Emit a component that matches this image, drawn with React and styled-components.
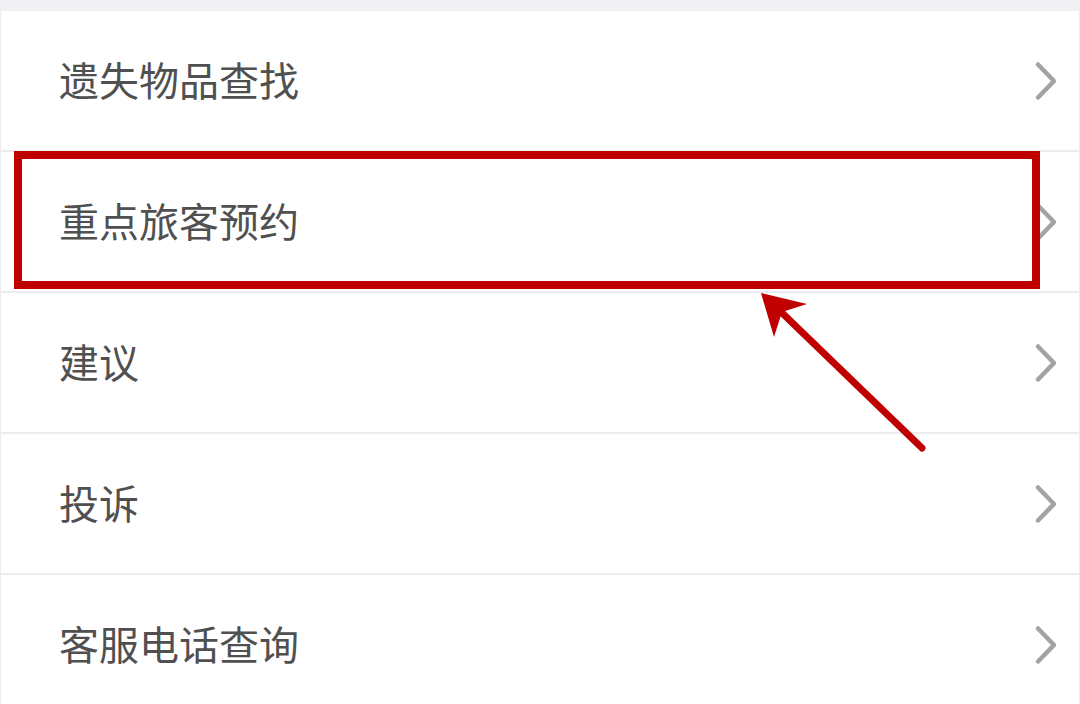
import React from "react";
import styled, { createGlobalStyle } from "styled-components";

const Global = createGlobalStyle`
  html, body { margin: 0; padding: 0; background: #f0f0f5; }
  body { font-family: "Noto Sans CJK SC", "Noto Sans", sans-serif; }
`;

const Page = styled.div`
  position: relative;
  width: 1080px;
  height: 704px;
  overflow: hidden;
  padding-top: 11px;
  box-sizing: border-box;
  background: #f0f0f5;
`;

const List = styled.ul`
  list-style: none;
  margin: 0;
  padding: 0;
  background: #ffffff;
  border-left: 1px solid #ececf1;
  border-right: 1px solid #ececf1;
`;

const Row = styled.li`
  position: relative;
  height: 139px;
  box-sizing: content-box;
  display: flex;
  align-items: center;
  justify-content: space-between;
  padding: 0 21px 0 58px;
  border-bottom: 2px solid #ebebf0;
  background: #ffffff;
`;

const Label = styled.span`
  font-size: 40px;
  font-weight: 400;
  line-height: 1;
  color: #505050;
  position: relative;
  top: -2px;
`;

const Chevron = styled.svg`
  width: 24px;
  height: 40px;
  flex: none;
`;

const Highlight = styled.div`
  position: absolute;
  left: 13px;
  top: -1px;
  width: 1026px;
  height: 138px;
  box-sizing: border-box;
  border: 8.5px solid #c00000;
  pointer-events: none;
`;

const ArrowLayer = styled.svg`
  position: absolute;
  left: 0;
  top: 0;
  width: 1080px;
  height: 704px;
  pointer-events: none;
`;

const items = ["遗失物品查找", "重点旅客预约", "建议", "投诉", "客服电话查询"];

function Arrow() {
  return (
    <ArrowLayer viewBox="0 0 1080 704">
      <line x1="922" y1="448" x2="778" y2="309" stroke="#c00000" strokeWidth="7" strokeLinecap="round" />
      <polygon points="761,293 807,304 782,312 774,337" fill="#c00000" />
    </ArrowLayer>
  );
}

export default function App() {
  return (
    <Page>
      <Global />
      <List>
        {items.map((t, i) => (
          <Row key={t}>
            <Label>{t}</Label>
            <Chevron viewBox="0 0 24 40">
              <polyline points="4,3.5 20,20 4,36.5" fill="none" stroke="#a3a3a3" strokeWidth="4.5" strokeLinecap="round" strokeLinejoin="round" />
            </Chevron>
            {i === 1 && <Highlight />}
          </Row>
        ))}
      </List>
      <Arrow />
    </Page>
  );
}
